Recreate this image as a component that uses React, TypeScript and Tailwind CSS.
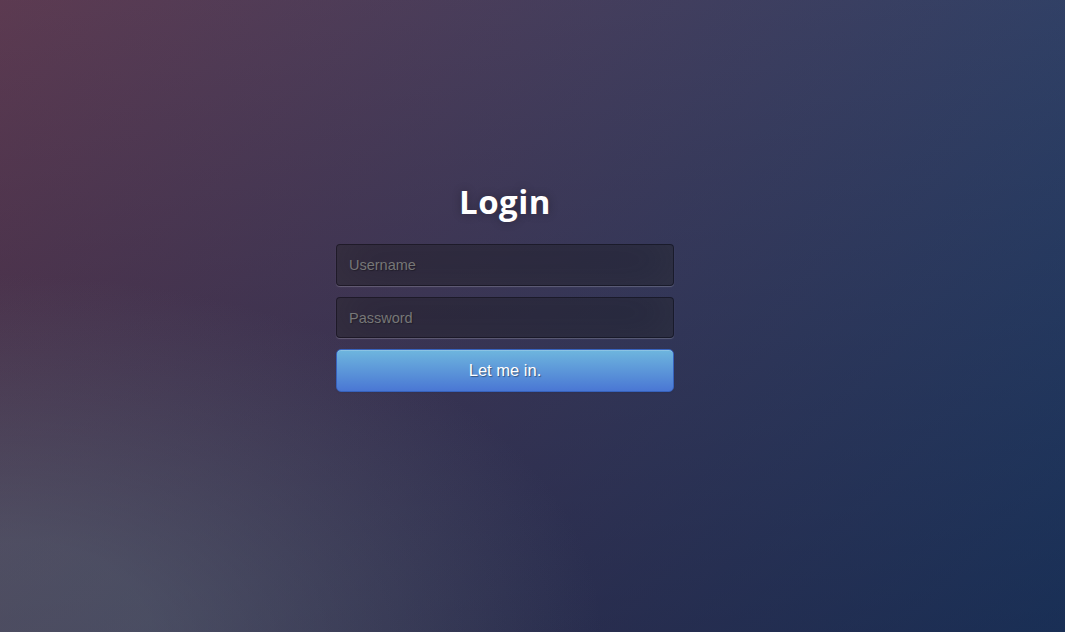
export default function App() {
    return (
        <div className="relative h-[632px] w-full overflow-hidden bg-[radial-gradient(ellipse_at_0%_100%,rgba(104,128,138,0.4)_10%,rgba(138,114,76,0)_40%),linear-gradient(to_bottom,rgba(57,173,219,0.22)_0%,rgba(42,60,87,0.4)_100%),linear-gradient(135deg,#661a2a_0%,#0e2654_100%)]">
            <div className="flex justify-center pr-[55px] pt-[180px]">
                <div className="flex w-[338px] flex-col">
                    {/* Title */}
                    <h1 className="text-center font-['Open_Sans',sans-serif] text-[33px] font-bold leading-[44px] tracking-[0.5px] text-white [text-shadow:0_0_10px_rgba(0,0,0,0.3)]">
                        Login
                    </h1>

                    <form className="mt-[20px] flex flex-col">
                        <input
                            type="text"
                            placeholder="Username"
                            className="mb-[11px] h-[42px] w-full rounded-[4px] border border-black/30 bg-black/30 px-[12px] font-['Liberation_Sans',Arial,sans-serif] text-[14.5px] text-white shadow-[inset_0_-5px_45px_rgba(100,100,100,0.2),0_1px_1px_rgba(255,255,255,0.2)] outline-none placeholder:text-[#777] [text-shadow:1px_1px_1px_rgba(0,0,0,0.3)]"
                        />
                        <input
                            type="password"
                            placeholder="Password"
                            className="mb-[11px] h-[41px] w-full rounded-[4px] border border-black/30 bg-black/30 px-[12px] font-['Liberation_Sans',Arial,sans-serif] text-[14.5px] text-white shadow-[inset_0_-5px_45px_rgba(100,100,100,0.2),0_1px_1px_rgba(255,255,255,0.2)] outline-none placeholder:text-[#777] [text-shadow:1px_1px_1px_rgba(0,0,0,0.3)]"
                        />
                        <button
                            type="button"
                            className="h-[43px] w-full rounded-[5px] border border-[#3762bc] bg-[linear-gradient(to_bottom,#6eb6de,#4a77d4)] font-['Liberation_Sans',Arial,sans-serif] text-[16.5px] text-white shadow-[inset_0_1px_0_rgba(255,255,255,0.2),0_1px_2px_rgba(0,0,0,0.05)] [text-shadow:1px_1px_1px_rgba(0,0,0,0.4)]"
                        >
                            Let me in.
                        </button>
                    </form>
                </div>
            </div>
        </div>
    );
}
